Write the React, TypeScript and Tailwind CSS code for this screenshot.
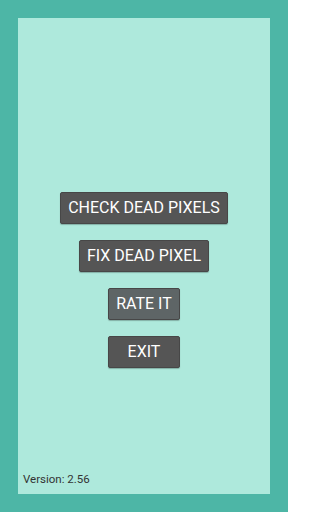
import React from 'react';

const buttons = [
  { label: 'CHECK DEAD PIXELS', tone: 'bg-[#555555]' },
  { label: 'FIX DEAD PIXEL', tone: 'bg-[#555555]' },
  { label: 'RATE IT', tone: 'bg-[#5e6566]' },
  { label: 'EXIT', tone: 'bg-[#555555]' },
];

const App: React.FC = () => {
  return (
    <div
      className="w-[288px] h-[512px] bg-[#4db6a6] p-[18px] overflow-hidden"
      style={{ fontFamily: 'Roboto, "Liberation Sans", sans-serif' }}
    >
      <div className="h-full bg-[#aee9dc] flex flex-col">
        <div className="flex flex-col items-center gap-4 pt-[174px]">
          {buttons.map((b) => (
            <button
              key={b.label}
              className={`${b.tone} min-w-[72px] h-8 px-[7px] rounded-[2px] border border-[#474747] text-white text-[16px] leading-none shadow-[0_1px_1px_rgba(0,0,0,0.25)]`}
            >
              {b.label}
            </button>
          ))}
        </div>
        <div className="mt-auto pl-[5px] pb-[6px] text-[11.5px] text-[#333333]">Version: 2.56</div>
      </div>
    </div>
  );
};

export default App;
